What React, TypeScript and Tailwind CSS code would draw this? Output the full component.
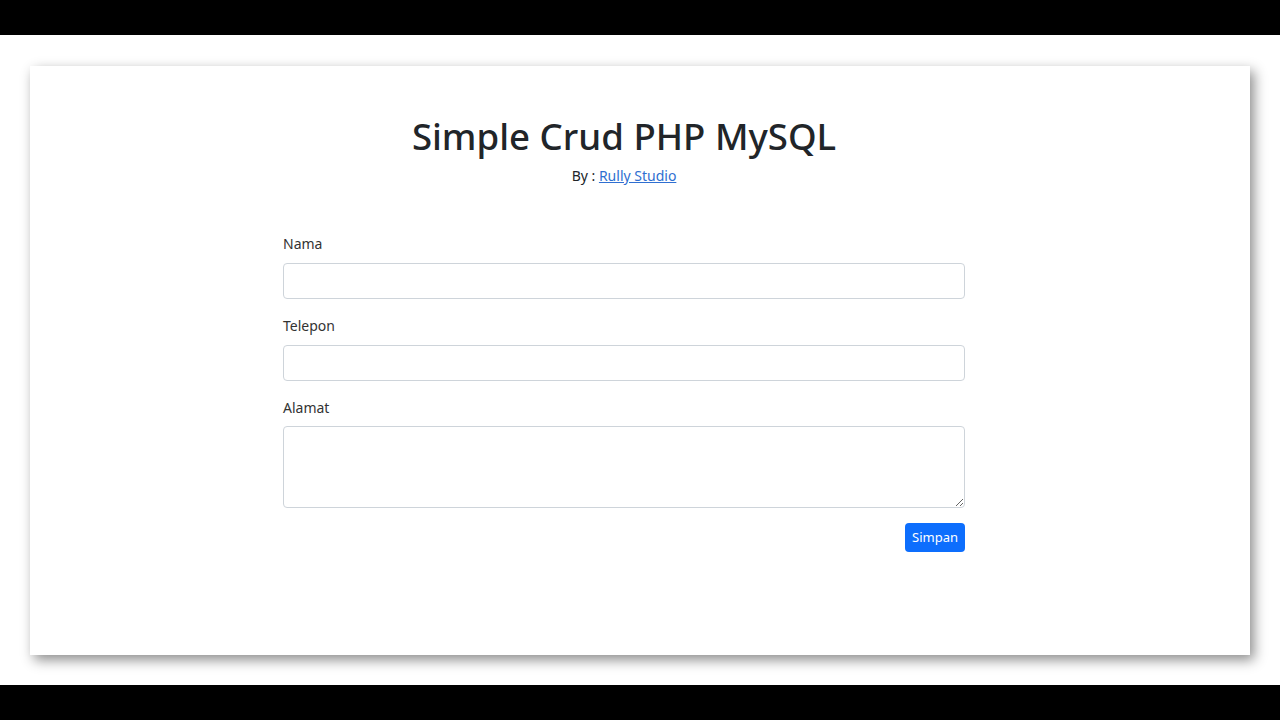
export default function App() {
  return (
    <div className="w-[1280px] h-[720px] bg-black flex flex-col" style={{ fontFamily: '"Noto Sans", "Open Sans", sans-serif' }}>
      <div className="h-[35px] shrink-0" />
      <div className="h-[650px] bg-white px-[30px] pt-[31px]">
        <div className="h-[589px] bg-white shadow-[4px_5px_12px_rgba(0,0,0,0.45)] pl-[253px]">
          <div className="w-[682px] text-[#212529]">
            {/* judul */}
            <div className="pt-[46px] text-center">
              <h1 className="text-[36.6px] leading-[48px] font-medium">Simple Crud PHP MySQL</h1>
              <p className="text-[14px] leading-[22px] mt-[5px]">
                By : <a href="#" className="text-[#2f6fd1] underline">Rully Studio</a>
              </p>
            </div>

            {/* form */}
            <form className="mt-[46px]">
              <label className="block text-[14px] leading-[22px] text-[#333]">Nama</label>
              <input type="text" className="block w-full h-[36px] mt-[8px] border border-[#ced4da] rounded-[4px] px-3 outline-none" />

              <label className="block text-[14px] leading-[22px] mt-[16px] text-[#333]">Telepon</label>
              <input type="text" className="block w-full h-[36px] mt-[8px] border border-[#ced4da] rounded-[4px] px-3 outline-none" />

              <label className="block text-[14px] leading-[22px] mt-[16px] text-[#333]">Alamat</label>
              <textarea className="block w-full h-[82px] mt-[7px] border border-[#ced4da] rounded-[4px] px-3 py-1 outline-none" />

              <div className="flex justify-end mt-[15px]">
                <button type="button" className="h-[29px] w-[60px] bg-[#0d6efd] text-white text-[13px] rounded-[4px]">
                  Simpan
                </button>
              </div>
            </form>
          </div>
        </div>
      </div>
    </div>
  );
}
